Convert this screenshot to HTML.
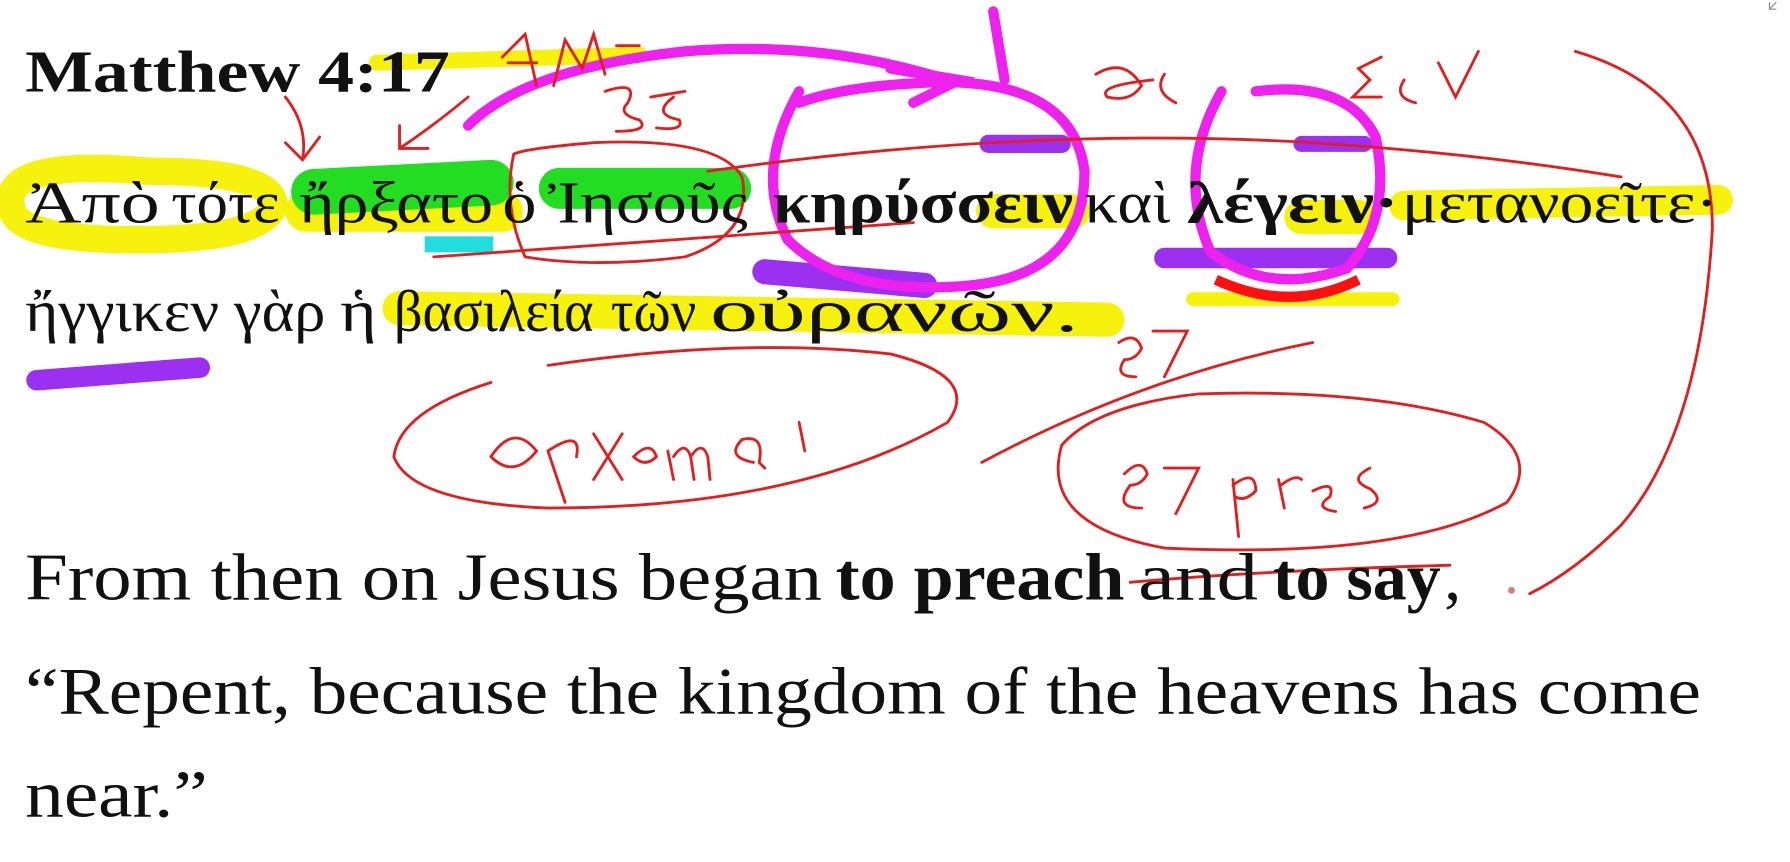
<!DOCTYPE html>
<html><head><meta charset="utf-8"><style>
html,body{margin:0;padding:0;background:#fff;width:1790px;height:862px;overflow:hidden}
svg{display:block}
text{font-family:"Liberation Serif","DejaVu Serif",serif;fill:#111}
</style></head><body>
<svg width="1790" height="862" viewBox="0 0 1568 755" preserveAspectRatio="none">
<rect width="1568" height="755" fill="#fff"/>
<g stroke="#f5f000" stroke-linecap="round" fill="none" opacity="0.95">
<path d="M330 55 L560 48" stroke-width="14"/>
<path d="M10 170 Q20 140 130 150 Q240 150 240 180 Q230 210 120 210 Q10 210 10 180" stroke-width="24"/>
<path d="M268 185 L440 185" stroke-width="36"/>
<path d="M350 270 L970 280" stroke-width="30"/>
<path d="M870 185 L940 185" stroke-width="30"/>
<path d="M1140 190 L1190 190" stroke-width="30"/>
<path d="M1230 180 L1505 175" stroke-width="26"/>
<path d="M1045 262 L1220 262" stroke-width="12"/>
</g>
<g stroke="#22dd22" stroke-linecap="round" fill="none">
<path d="M275 168 L430 160" stroke-width="40"/>
<path d="M490 165 L640 165" stroke-width="36"/>
</g>
<path d="M372 214 L432 214" stroke="#22dddd" stroke-width="14"/>
<g stroke="#9b30f0" stroke-linecap="round" fill="none">
<path d="M866 126 L930 126" stroke-width="16"/>
<path d="M1140 126 L1195 126" stroke-width="14"/>
<path d="M670 238 L810 250" stroke-width="22"/>
<path d="M1020 226 L1215 226" stroke-width="18"/>
<path d="M32 333 L175 322" stroke-width="18"/>
</g>
<path d="M1065 245 Q1130 275 1190 245" stroke="#ff1010" stroke-width="9" fill="none"/>
<g stroke="#ee22ee" stroke-linecap="round" fill="none" stroke-width="9">
<path d="M700 80 Q660 150 690 210 Q740 260 850 250 Q950 240 950 150 Q940 70 820 72 Q740 75 700 90"/>
<path d="M1070 80 Q1030 150 1060 220 Q1110 260 1180 235 Q1220 190 1205 120 Q1180 70 1100 80"/>
<path d="M410 110 Q460 60 600 45 Q720 35 830 70"/>
<path d="M870 10 L880 70"/>
<path d="M780 60 L840 70 L800 90"/>
</g>
<g stroke="#e02020" stroke-width="2.5" fill="none" stroke-linecap="round">
<path d="M440 50 L460 30 L470 75 M445 55 L470 55 M485 75 L495 35 L510 60 L520 30 L530 65 M540 40 L560 40"/>
<path d="M530 80 Q560 70 550 90 Q540 100 560 105 Q570 115 540 115 M570 85 L600 80 M590 85 Q570 100 595 105 Q600 115 575 112"/>
<path d="M250 85 Q270 110 265 140 M250 125 L265 140 L280 120"/>
<path d="M410 85 Q380 110 350 130 M350 110 L350 130 L375 130"/>
<path d="M450 135 Q440 180 460 225 Q520 235 600 225 Q660 205 650 155 Q630 120 520 125 Q460 130 450 135"/>
<path d="M620 150 Q900 110 1150 125 Q1300 135 1420 155"/>
<path d="M380 225 Q600 210 800 195"/>
<path d="M960 65 Q985 50 1000 75 Q990 90 970 85 Q960 75 1010 70 M1020 65 Q1010 80 1030 90"/>
<path d="M1210 50 L1190 60 L1200 70 L1185 85 L1210 85 M1230 70 Q1220 85 1240 90 M1260 55 L1275 85 L1295 45"/>
<path d="M1380 45 Q1500 80 1500 200 Q1490 380 1420 460 Q1380 500 1340 520"/>
<path d="M430 335 Q350 360 345 400 Q360 440 480 445 Q700 445 830 370 Q860 330 780 310 Q650 295 480 320"/>
<path d="M430 400 Q450 370 470 395 Q450 420 430 400 M480 395 L495 440 M480 395 Q510 375 505 400 M520 380 L545 420 M545 380 L520 420 M555 400 Q570 385 575 400 Q565 410 555 400 M585 395 L590 420 M590 400 Q600 385 605 400 L608 420 M605 400 Q615 385 620 400 L622 420 M650 385 Q670 380 665 405 L670 410 M650 385 Q635 400 660 405 M700 370 L705 395"/>
<path d="M860 405 Q1000 330 1150 300"/>
<path d="M930 390 Q910 460 1020 480 Q1230 490 1320 440 Q1350 400 1300 370 Q1200 340 1050 345 Q960 355 930 390"/>
<path d="M980 300 Q995 290 1000 305 Q995 315 985 315 Q975 330 995 330 M1010 290 L1040 290 L1020 330"/>
<path d="M985 415 Q1000 400 1005 415 Q1000 425 990 425 Q975 445 1000 445 M1020 410 L1050 410 L1030 450 M1080 420 L1085 470 M1080 425 Q1100 410 1100 430 Q1090 440 1082 435 M1120 420 L1125 445 M1122 425 Q1135 415 1140 420 M1150 430 Q1170 420 1165 435 Q1150 445 1170 448 M1200 410 Q1180 420 1200 428 Q1215 440 1195 445"/>
<path d="M990 510 Q1100 500 1270 495"/>
</g>
<circle cx="1324" cy="517" r="3" fill="#d08080"/>
<text x="22" y="80" font-size="52" font-weight="bold" textLength="372" lengthAdjust="spacingAndGlyphs">Matthew 4:17</text>
<g font-size="52">
<text x="22" y="195" textLength="118" lengthAdjust="spacingAndGlyphs">Ἀπὸ</text>
<text x="150" y="195" textLength="95" lengthAdjust="spacingAndGlyphs">τότε</text>
<text x="262" y="195" textLength="170" lengthAdjust="spacingAndGlyphs">ἤρξατο</text>
<text x="440" y="195" textLength="30" lengthAdjust="spacingAndGlyphs">ὁ</text>
<text x="480" y="195" textLength="175" lengthAdjust="spacingAndGlyphs">Ἰησοῦς</text>
<text x="677" y="195" textLength="263" font-weight="bold" lengthAdjust="spacingAndGlyphs">κηρύσσειν</text>
<text x="950" y="195" textLength="75" lengthAdjust="spacingAndGlyphs">καὶ</text>
<text x="1040" y="195" textLength="185" font-weight="bold" lengthAdjust="spacingAndGlyphs">λέγειν·</text>
<text x="1228" y="195" textLength="277" lengthAdjust="spacingAndGlyphs">μετανοεῖτε·</text>
<text x="22" y="290" textLength="170" lengthAdjust="spacingAndGlyphs">ἤγγικεν</text>
<text x="205" y="290" textLength="80" lengthAdjust="spacingAndGlyphs">γὰρ</text>
<text x="298" y="290" textLength="32" lengthAdjust="spacingAndGlyphs">ἡ</text>
<text x="345" y="290" textLength="175" lengthAdjust="spacingAndGlyphs">βασιλεία</text>
<text x="535" y="290" textLength="75" lengthAdjust="spacingAndGlyphs">τῶν</text>
<text x="622" y="290" textLength="323" lengthAdjust="spacingAndGlyphs">οὐρανῶν.</text>
</g>
<g font-size="58">
<text x="22" y="525" textLength="698" lengthAdjust="spacingAndGlyphs">From then on Jesus began</text>
<text x="732" y="525" textLength="253" font-weight="bold" lengthAdjust="spacingAndGlyphs">to preach</text>
<text x="997" y="525" textLength="105" lengthAdjust="spacingAndGlyphs">and</text>
<text x="1115" y="525" textLength="147" font-weight="bold" lengthAdjust="spacingAndGlyphs">to say</text>
<text x="1265" y="525" textLength="15" lengthAdjust="spacingAndGlyphs">,</text>
<text x="22" y="625" textLength="1468" lengthAdjust="spacingAndGlyphs">“Repent, because the kingdom of the heavens has come</text>
<text x="22" y="715" textLength="160" lengthAdjust="spacingAndGlyphs">near.”</text>
</g>
<path d="M1550 8 L1556 2 M1550 2 L1550 8 L1556 8" stroke="#888" stroke-width="1" fill="none"/>
</svg>
</body></html>
